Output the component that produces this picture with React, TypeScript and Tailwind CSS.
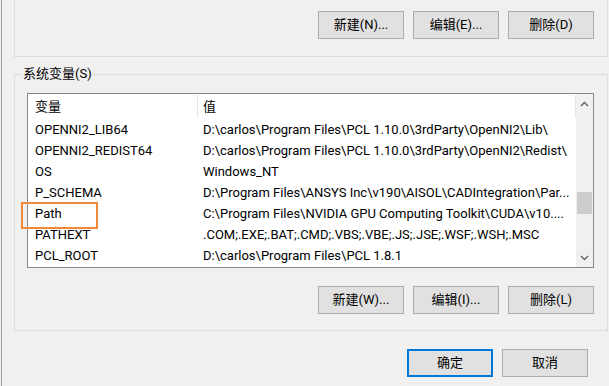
import React from "react";

const FONT = {
  fontFamily: 'Roboto, "Noto Sans CJK SC", sans-serif',
};

const rows = [
  ["OPENNI2_LIB64", "D:\\carlos\\Program Files\\PCL 1.10.0\\3rdParty\\OpenNI2\\Lib\\"],
  ["OPENNI2_REDIST64", "D:\\carlos\\Program Files\\PCL 1.10.0\\3rdParty\\OpenNI2\\Redist\\"],
  ["OS", "Windows_NT"],
  ["P_SCHEMA", "D:\\Program Files\\ANSYS Inc\\v190\\AISOL\\CADIntegration\\Par..."],
  ["Path", "C:\\Program Files\\NVIDIA GPU Computing Toolkit\\CUDA\\v10...."],
  ["PATHEXT", ".COM;.EXE;.BAT;.CMD;.VBS;.VBE;.JS;.JSE;.WSF;.WSH;.MSC"],
  ["PCL_ROOT", "D:\\carlos\\Program Files\\PCL 1.8.1"],
];

const Btn = ({ label, primary }: { label: string; primary?: boolean }) => (
  <div
    className={`w-[86px] h-[28px] flex items-center justify-center bg-[#e1e1e1] text-[13px] text-black ${
      primary ? "border-2 border-[#0078d7]" : "border border-[#adadad]"
    }`}
  >
    {label}
  </div>
);

const Chevron = ({ up }: { up?: boolean }) => (
  <svg width="9" height="6" viewBox="0 0 9 6">
    <polyline
      points={up ? "1,5 4.5,1.5 8,5" : "1,1 4.5,4.5 8,1"}
      fill="none"
      stroke="#606060"
      strokeWidth="1.4"
    />
  </svg>
);

const App = () => {
  return (
    <div
      className="relative w-[609px] h-[386px] bg-[#f0f0f0] flex overflow-hidden text-black"
      style={FONT}
    >
      <div className="w-[1px]" />
      <div className="w-[1px] bg-[#a0a0a0]" />
      <div className="flex-1 flex flex-col">
        {/* user vars group, top edge is off screen */}
        <div className="ml-[12px] w-[594px] h-[57px] border-l border-r border-b border-[#dcdcdc] pt-[11px] pr-[13px] flex justify-end gap-[9px]">
          <Btn label="新建(N)..." />
          <Btn label="编辑(E)..." />
          <Btn label="删除(D)" />
        </div>

        {/* system vars group */}
        <div className="relative mt-[17px] ml-[12px] w-[594px] h-[257px] border border-[#dcdcdc] flex flex-col">
          <span className="absolute left-[7px] top-[-10px] px-[1px] bg-[#f0f0f0] text-[13px] leading-[18px]">
            系统变量(S)
          </span>
          <div className="mt-[18px] ml-[12px] w-[567px] h-[175px] border border-[#828790] bg-white flex text-[13px]">
            <div className="flex-1 flex flex-col">
              <div className="h-[25px] flex items-center">
                <div className="w-[169px] pl-[7px]">变量</div>
                <div className="w-[1px] h-[23px] bg-[#e5e5e5]" />
                <div className="flex-1 pl-[5px]">值</div>
                <div className="w-[1px] h-[23px] bg-[#e5e5e5]" />
              </div>
              {rows.map(([name, value]) => (
                <div key={name} className="h-[21px] flex items-center whitespace-nowrap">
                  <div className="w-[169px] pl-[7px]">{name}</div>
                  <div className="w-[1px]" />
                  <div className="flex-1 pl-[5px] overflow-hidden">{value}</div>
                </div>
              ))}
            </div>
            <div className="w-[17px] bg-[#f0f0f0] flex flex-col items-center">
              <div className="h-[17px] flex items-center justify-center pt-[2px]">
                <Chevron up />
              </div>
              <div className="h-[81px]" />
              <div className="w-[15px] h-[22px] bg-[#cdcdcd]" />
              <div className="flex-1" />
              <div className="h-[17px] flex items-center justify-center pb-[2px]">
                <Chevron />
              </div>
            </div>
          </div>
          <div className="mt-[18px] pr-[13px] flex justify-end gap-[9px]">
            <Btn label="新建(W)..." />
            <Btn label="编辑(I)..." />
            <Btn label="删除(L)" />
          </div>
        </div>

        <div className="mt-[18px] pr-[21px] flex justify-end gap-[9px]">
          <Btn label="确定" primary />
          <Btn label="取消" />
        </div>
      </div>

      {/* highlight annotation */}
      <div className="absolute left-[21px] top-[202px] w-[77px] h-[27px] border-2 border-[#f08a3a]" />
    </div>
  );
};

export default App;
